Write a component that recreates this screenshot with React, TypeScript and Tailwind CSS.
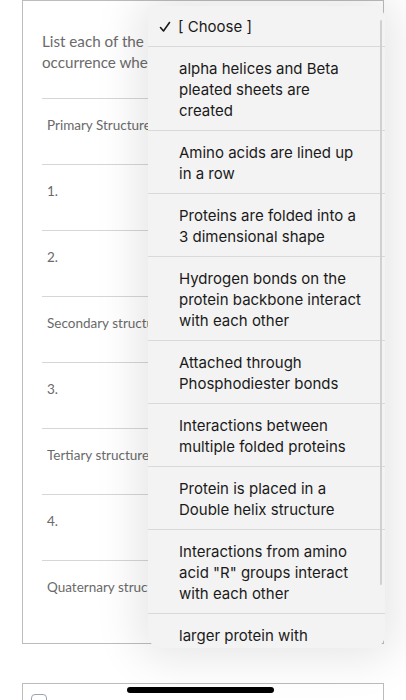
const rows = [
  "Primary Structure",
  "1.",
  "2.",
  "Secondary structure",
  "3.",
  "Tertiary structure",
  "4.",
  "Quaternary structure",
];

const options = [
  ["alpha helices and Beta", "pleated sheets are", "created"],
  ["Amino acids are lined up", "in a row"],
  ["Proteins are folded into a", "3 dimensional shape"],
  ["Hydrogen bonds on the", "protein backbone interact", "with each other"],
  ["Attached through", "Phosphodiester bonds"],
  ["Interactions between", "multiple folded proteins"],
  ["Protein is placed in a", "Double helix structure"],
  ["Interactions from amino", 'acid "R" groups interact', "with each other"],
  ["larger protein with", "other proteins"],
];

const ChoicesMenu = () => (
  <div className="absolute left-[148px] top-[6px] w-[237px] h-[642px] rounded-[13px] bg-[#f3f3f3] shadow-[0_0_45px_10px_rgba(0,0,0,0.1)] overflow-hidden flex flex-col font-['Inter','Liberation_Sans',sans-serif] text-[15px] leading-[21px] text-[#1a1a1a]">
    <div className="flex items-center gap-[7px] h-[41px] pl-[11px] pt-[1px] border-b border-[#d9d9d9] shrink-0">
      <svg
        viewBox="0 0 12 12"
        className="w-[12px] h-[12px]"
        fill="none"
        stroke="#1a1a1a"
        strokeWidth="1.6"
        strokeLinecap="round"
        strokeLinejoin="round"
      >
        <path d="M1.5 6.5 L4.5 10 L10.5 1.5" />
      </svg>
      <span>[ Choose ]</span>
    </div>
    {options.map((lines, i) => (
      <div
        key={i}
        className="flex flex-col shrink-0 pl-[31px] pr-2 pt-[11px] pb-[9px] border-b border-[#d9d9d9]"
      >
        {lines.map((l) => (
          <span key={l} className="whitespace-nowrap">
            {l}
          </span>
        ))}
      </div>
    ))}
    <div className="absolute right-[3px] top-[14px] w-[2.5px] h-[565px] rounded-full bg-[#d0d0d0]" />
  </div>
);

export default function App() {
  return (
    <div className="relative h-[700px] bg-white overflow-hidden flex flex-col">
      <div className="mx-[22px] h-[644px] shrink-0 border border-[#bcbcbc] pl-[19px] pr-4 flex flex-col font-['Lato','Liberation_Sans',sans-serif] text-[#6a6a6a]">
        <div className="flex flex-col pt-[30px] pb-[25px] text-[15.2px] leading-[21px]">
          <span>List each of the</span>
          <span>occurrence where these happen</span>
        </div>
        {rows.map((r, i) => (
          <div
            key={i}
            className="h-[66px] shrink-0 border-t border-[#d6d6d6] pl-[5px] pt-[16px] text-[13.5px] leading-[20px] whitespace-nowrap"
          >
            {r}
          </div>
        ))}
      </div>

      <div className="mt-[39px] mx-[22px] h-[30px] border border-[#bcbcbc] border-b-0 flex items-start pl-[8px] pt-[10px]">
        <div className="w-[16px] h-[16px] rounded-[4px] border border-[#9aa4b0]" />
      </div>

      <ChoicesMenu />

      <div className="absolute left-[127px] top-[687px] w-[147px] h-[6px] rounded-full bg-black" />
    </div>
  );
}
